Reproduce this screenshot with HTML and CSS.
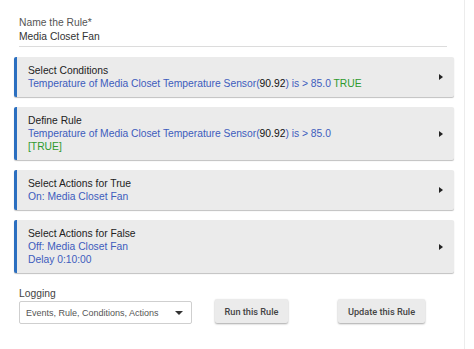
FILE: index.html
```html
<!DOCTYPE html>
<html lang="en">
<head>
    <meta charset="UTF-8">
    <title>Rule</title>
    <link rel="stylesheet" href="styles.css">
</head>
<body>
    <div class="page">
        <!-- rule name -->
        <div class="field">
            <div class="field-label">Name the Rule*</div>
            <div class="field-value">Media Closet Fan</div>
        </div>

        <div class="section">
            <div class="section-text">
                <div class="section-title">Select Conditions</div>
                <div class="blue">Temperature of Media Closet Temperature Sensor(<span class="black">90.92</span>) is &gt; 85.0 <span class="green">TRUE</span></div>
            </div>
            <span class="arrow"></span>
        </div>

        <div class="section">
            <div class="section-text">
                <div class="section-title">Define Rule</div>
                <div class="blue">Temperature of Media Closet Temperature Sensor(<span class="black">90.92</span>) is &gt; 85.0</div>
                <div class="green">[TRUE]</div>
            </div>
            <span class="arrow"></span>
        </div>

        <div class="section">
            <div class="section-text">
                <div class="section-title">Select Actions for True</div>
                <div class="blue">On: Media Closet Fan</div>
            </div>
            <span class="arrow"></span>
        </div>

        <div class="section">
            <div class="section-text">
                <div class="section-title">Select Actions for False</div>
                <div class="blue">Off: Media Closet Fan</div>
                <div class="blue">Delay 0:10:00</div>
            </div>
            <span class="arrow"></span>
        </div>

        <!-- logging and buttons -->
        <div class="footer">
            <div class="logging">
                <div class="logging-label">Logging</div>
                <div class="select">
                    <span>Events, Rule, Conditions, Actions</span>
                    <span class="caret"></span>
                </div>
            </div>
            <button class="btn btn-run">Run this Rule</button>
            <button class="btn btn-update">Update this Rule</button>
        </div>
    </div>
</body>
</html>
```

FILE: styles.css
```css
*{
    margin: 0;
    padding: 0;
    box-sizing: border-box;
}

body{
    background-color: #fff;
    font-family: "Liberation Sans", Arial, sans-serif;
    font-size: 10.3px;
    color: #222;
}

/* main column, with the thin line on the right */
.page{
    width: 465px;
    height: 349px;
    padding: 16px 10px 0 14px;
    border-right: 1px solid #ececec;
}

/* name field */
.field{
    margin: 0 7px 0 5px;
    padding-bottom: 3px;
    border-bottom: 1px solid #dcdcdc;
}
.field-label{
    line-height: 13px;
    color: #555;
}
.field-value{
    margin-top: 1px;
    line-height: 13px;
    color: #333;
}

/* grey collapsible sections */
.section{
    display: flex;
    align-items: center;
    justify-content: space-between;
    margin-top: 10px;
    padding: 7px 11px 7px 11px;
    background-color: #ebebeb;
    border-left: 3px solid #2b6fc0;
    border-radius: 2px;
    box-shadow: 0 1px 1px rgba(0, 0, 0, 0.25);
}
.section-text{
    line-height: 13px;
}
.section-title{
    color: #222;
}
.blue{
    color: #3d5cbd;
}
.black{
    color: #111;
}
.green{
    color: #2e9a2e;
}

/* small black triangle */
.arrow{
    width: 0;
    height: 0;
    border-top: 3px solid transparent;
    border-bottom: 3px solid transparent;
    border-left: 4px solid #222;
}

/* footer */
.footer{
    display: flex;
    align-items: flex-end;
    margin: 14px 0 0 5px;
}
.logging-label{
    line-height: 13px;
    color: #444;
}
.select{
    display: flex;
    align-items: center;
    justify-content: space-between;
    width: 173px;
    height: 23px;
    margin-top: 1px;
    padding: 0 8px 0 6px;
    border: 1px solid #cfcfcf;
    border-radius: 2px;
    font-size: 9px;
    color: #555;
}
.caret{
    width: 0;
    height: 0;
    border-left: 4px solid transparent;
    border-right: 4px solid transparent;
    border-top: 4px solid #333;
}

.btn{
    height: 24px;
    margin-bottom: 1px;
    border: none;
    border-radius: 2px;
    background-color: #ebebeb;
    box-shadow: 0 1px 2px rgba(0, 0, 0, 0.35);
    font-family: Roboto, "Liberation Sans", sans-serif;
    font-size: 9.2px;
    font-weight: 500;
    color: #444;
}
.btn-run{
    width: 73px;
    margin-left: 23px;
}
.btn-update{
    width: 87px;
    margin-left: 50px;
}
```
